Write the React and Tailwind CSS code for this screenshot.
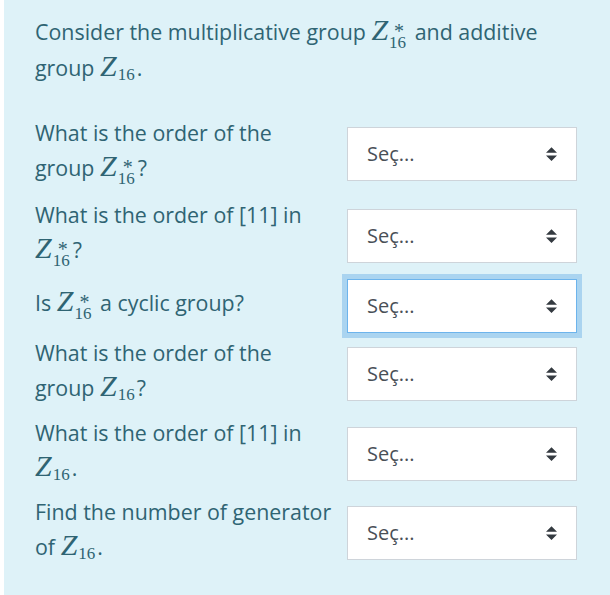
import React from "react";

const Z = ({ star }) => (
  <span className="whitespace-nowrap">
    <span className="font-['Liberation_Serif',serif] italic text-[30px] leading-none mr-[1px]">Z</span>
    {star ? (
      <span className="inline-block align-[-8px] font-['Liberation_Serif',serif] leading-none mr-[3px]">
        <span className="block text-right text-[20px] leading-[12px] pr-[2px]">*</span>
        <span className="block text-[17px] leading-[11px]">16</span>
      </span>
    ) : (
      <span className="align-[-4px] font-['Liberation_Serif',serif] text-[17px] leading-none mr-[2px]">16</span>
    )}
  </span>
);

const ROWS = [
  {
    mt: "mt-0",
    lines: ["What is the order of the", <>group <Z star />?</>]
  },
  {
    mt: "mt-[4px]",
    lines: ["What is the order of [11] in", <><Z star />?</>]
  },
  {
    mt: "mt-[4px]",
    focused: true,
    lines: [<>Is <Z star /> a cyclic group?</>]
  },
  {
    mt: "mt-[2px]",
    lines: ["What is the order of the", <>group <Z />?</>]
  },
  {
    mt: "mt-[2px]",
    lines: ["What is the order of [11] in", <><Z />.</>]
  },
  {
    mt: "mt-[1px]",
    lines: ["Find the number of generator", <>of <Z />.</>]
  }
];

const SelectBox = ({ focused }) => (
  <div
    className={
      focused
        ? "flex items-center justify-between w-[230px] h-[54px] bg-white border border-[#6db4ec] shadow-[0_0_0_5px_#aad4f0] pl-[19px] pr-[19px]"
        : "flex items-center justify-between w-[230px] h-[54px] bg-white border border-[#ced4da] pl-[19px] pr-[19px]"
    }
  >
    <span className="text-[20px] text-[#495057] leading-none">Seç...</span>
    <svg width="11" height="14" viewBox="0 0 4 5" className="block">
      <path d="M2 0L0 2h4zm0 5L0 3h4z" fill="#343a40" />
    </svg>
  </div>
);

export default function App() {
  return (
    <div className="bg-white pl-[4px] font-['Open_Sans',sans-serif]">
      <div className="bg-[#def2f8] text-[#2f6473] min-h-[595px] pl-[31px] pt-[14px] text-[21.4px]">
        <div className="leading-[36px]">
          <div>
            Consider the multiplicative group <Z star /> and additive
          </div>
          <div>
            group <Z />.
          </div>
        </div>

        <div className="mt-[29px]">
          {ROWS.map((row, idx) => (
            <div key={idx} className={`flex items-center ${row.mt}`}>
              <div className="w-[300px] leading-[35px] pb-[8px]">
                {row.lines.map((line, i) => (
                  <div key={i}>{line}</div>
                ))}
              </div>
              <div className="ml-[12px]">
                <SelectBox focused={row.focused} />
              </div>
            </div>
          ))}
        </div>
      </div>
    </div>
  );
}
